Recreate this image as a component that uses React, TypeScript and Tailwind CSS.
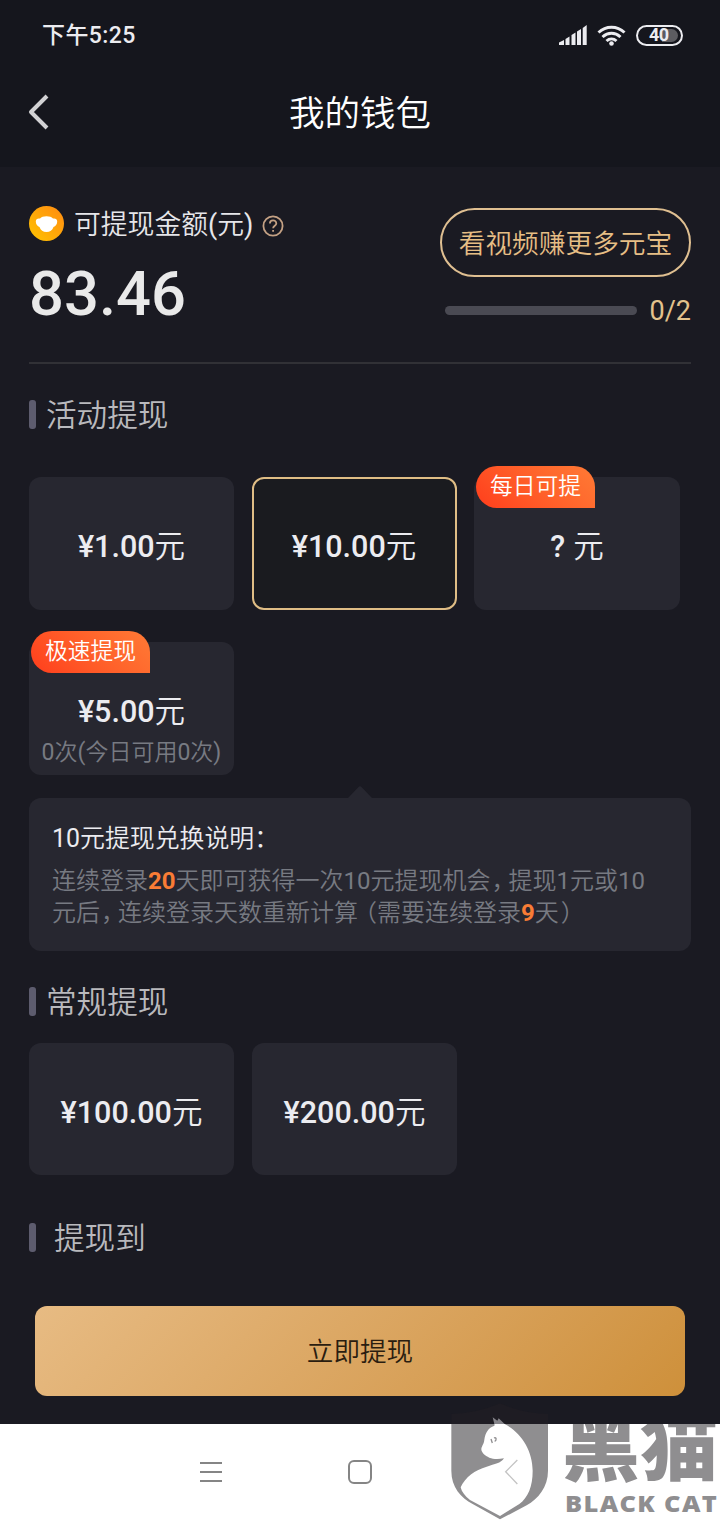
import React from "react";

const activityCards = [
  { amount: "¥1.00" },
  { amount: "¥10.00", active: true },
  { amount: "?", badge: "每日可提", gap: true },
  { amount: "¥5.00", badge: "极速提现", note: true },
];

const normalCards = [{ amount: "¥100.00" }, { amount: "¥200.00" }];

type CardProps = {
  amount: string;
  active?: boolean;
  badge?: string;
  note?: boolean;
  gap?: boolean;
};

const Card = ({ amount, active, badge, note, gap }: CardProps) => (
  <div
    className={`relative flex h-full items-center justify-center rounded-[12px] ${
      active ? "border-2 border-[#dfbd85] bg-[#1a1b1f]" : "bg-[#272730]"
    }`}
  >
    <p className="flex items-center whitespace-pre pt-[7px] text-[30.5px] leading-[36px] text-[#ececf0]">
      <span className="font-medium">{amount}</span>
      <span className={gap ? "ml-2 font-[350]" : "font-[350]"}>元</span>
    </p>
    {badge && (
      <span className="absolute -top-[11px] left-[2px] flex h-[42px] w-[119px] items-center justify-center rounded-[21px] rounded-br-none bg-linear-45 from-[#ff3c1c] to-[#ff7a35] pt-[1px] text-[22.8px] font-[350] text-white">
        {badge}
      </span>
    )}
    {note && (
      <span className="absolute inset-x-0 bottom-[6px] whitespace-nowrap text-center text-[23px] leading-[32px] font-[350] text-[#777a82]">
        <span className="font-normal">0</span>次<span className="font-normal">(</span>今日可用
        <span className="font-normal">0</span>次<span className="font-normal">)</span>
      </span>
    )}
  </div>
);

const SectionTitle = ({ title, wide }: { title: string; wide?: boolean }) => (
  <div className="flex h-[30px] items-center">
    <span className="h-[29px] w-[7px] rounded-[3px] bg-[#5d5c6e]" />
    <h2
      className={`pt-[3px] text-[30.6px] leading-[30px] font-[350] text-[#b9b9bd] ${
        wide ? "ml-[18px]" : "ml-[10px]"
      }`}
    >
      {title}
    </h2>
  </div>
);

// half-width comma
const Comma = () => (
  <span className="ml-[1px] mr-[5px] [font-feature-settings:'halt']">，</span>
);

const StatusBar = () => (
  <div className="flex h-[70px] items-center justify-between pl-[42px] pr-[37px] text-[#ececf0]">
    <span className="pt-[2px] text-[23px] font-medium tracking-[0.4px]">下午5:25</span>
    <div className="flex items-center">
      <svg width="28" height="20" viewBox="0 0 28 20" fill="#ececf0">
        <path d="M0 20v-2.500l5-2.500v5zM6.500 20v-6l4-2.500v8.500zM12.500 20v-10l4-2.500v12.500zM18 20V6.500l4-2.500v16zM23.700 20V3l4-3v20z" />
      </svg>
      <svg className="ml-[10px]" width="29" height="21" viewBox="0 0 29 21" fill="none" stroke="#ececf0" strokeWidth="3">
        <path d="M1.500 7.500c7.500-7 18.500-7 26 0M5.500 12c5.500-5 12.500-5 18 0M9.500 16c3-2.700 7-2.700 10 0" />
        <circle cx="14.500" cy="18.500" r="2.300" fill="#ececf0" stroke="none" />
      </svg>
      <div className="relative ml-[10px] flex h-[21px] w-[47px] items-center rounded-full border-2 border-[#ececf0] pl-[11px]">
        <span className="absolute right-[3px] top-[2px] h-[13px] w-[16px] rounded-r-full bg-[#5c5c61]" />
        <span className="relative text-[18px] leading-[18px] font-bold tracking-[-0.5px]">40</span>
      </div>
    </div>
  </div>
);

const Coin = () => (
  <svg className="-mt-[2px]" width="35" height="35" viewBox="0 0 35 35">
    <defs>
      <linearGradient id="coin" x1="0" y1="1" x2="1" y2="0">
        <stop offset="0" stopColor="#ffc400" />
        <stop offset="1" stopColor="#ff8a12" />
      </linearGradient>
    </defs>
    <circle cx="17.500" cy="17.500" r="17.500" fill="url(#coin)" />
    <path
      d="M6.800 15.500c0-2.600 1.800-3.400 4.200-3 1.300-1.600 3.500-2.300 6.500-2.300s5.200.7 6.500 2.300c2.400-.4 4.200.4 4.200 3 0 3-1.700 4.500-3.700 5.500-1.200 3.300-3.500 5-7 5s-5.800-1.700-7-5c-2-1-3.700-2.500-3.700-5.500z"
      fill="#fff"
    />
  </svg>
);

const Watermark = () => (
  <>
    <svg className="absolute -top-[34px] left-[440px]" width="110" height="130" viewBox="0 0 330 390">
      <path d="M34 72Q110 70 180 40q70 30 144 32v30H34z" fill="#1e1c23" />
      <path d="M34 102h290v140c0 50-30 84-64 104l-80 42-82-46c-36-20-64-50-64-100z" fill="#8f8e90" />
      <path d="M158 82l14 10 4-7 18 17h-31z" fill="#85848a" />
      <path
        d="M163 102h31c50 26 84 80 84 140 0 48-14 80-40 100l-58 36-90-48c-15-12-25-24-28-38 13-30 43-52 78-62 25-8 42-10 52-25-17 3-32 3-44-2-13-5-24-16-24-25 0-9 8-16 9-29 3-20 13-36 27-40 5-2 4-4 3-7z"
        fill="#fff"
      />
      <path d="M153 147l4 12M162 144c8-4 8 8 2 10" stroke="#8f8e90" strokeWidth="4" fill="none" />
      <path d="M232 210l-35 35 35 37" stroke="#c4c4c4" strokeWidth="4" fill="none" />
    </svg>
    <div className="absolute inset-y-0 left-[562px] w-[158px] overflow-hidden text-[#8f8e90]">
      <p className="-mt-[15px] whitespace-nowrap text-[78px] leading-[80px] font-black">黑猫</p>
      <p className="mt-[3px] ml-[3px] w-[136px] origin-left scale-x-[1.13] whitespace-nowrap font-['Open_Sans'] text-[22.500px] leading-[24px] font-extrabold tracking-[1.200px]">
        BLACK CAT
      </p>
    </div>
  </>
);

const App = () => {
  return (
    <div className="flex h-[1520px] w-[720px] flex-col overflow-hidden bg-[#1a1a22] font-[Roboto,'Noto_Sans_CJK_SC',sans-serif]">
      <header className="h-[167px] bg-[#15161d]">
        <StatusBar />
        <div className="grid h-[84px] grid-cols-[1fr_auto_1fr] items-center">
          <svg className="ml-[27px]" width="22" height="38" viewBox="0 0 22 38" fill="none" stroke="#d2d2d4" strokeWidth="4" strokeLinejoin="round">
            <path d="M20 3L4 19l16 16" />
          </svg>
          <h1 className="pt-[3px] text-[35.500px] leading-[44px] font-[350] text-white">我的钱包</h1>
        </div>
      </header>

      <main className="flex h-[1257px] flex-col px-[29px]">
        <section className="flex h-[197px] justify-between border-b-2 border-[#313136]">
          <div className="pt-[39px]">
            <div className="flex h-[36px] items-center">
              <Coin />
              <span className="ml-[10px] pt-[2px] text-[26.8px] leading-[34px] font-[350] text-[#e6e6ea]">
                可提现金额<span className="font-normal">(</span>元<span className="font-normal">)</span>
              </span>
              <svg className="mt-[4px] ml-[9px]" width="22" height="22" viewBox="0 0 22 22" fill="none" stroke="#c4a184" strokeWidth="1.800">
                <circle cx="11" cy="11" r="9.600" />
                <path d="M7.900 8.600c0-4.200 6.400-4.200 6.400-.2 0 2.300-3.200 2.400-3.200 4.900M11.100 15v1.800" />
              </svg>
            </div>
            <p className="mt-[17px] text-[61.500px] leading-[70px] font-medium text-[#e9e9e9]">83.46</p>
          </div>
          <div className="flex w-[251px] flex-col pt-[41px]">
            <button className="h-[69px] rounded-full border-2 border-[#dfbf91] pt-[3px] text-[26.7px] font-[350] text-[#e6be85]">
              看视频赚更多元宝
            </button>
            <div className="mt-[16px] flex items-center justify-between pl-[5px]">
              <span className="h-[9px] w-[192px] rounded-full bg-[#4a4a53]" />
              <span className="pt-[1px] text-[27px] leading-[34px] text-[#e3c28c]">0/2</span>
            </div>
          </div>
        </section>

        <div className="mt-[35px]">
          <SectionTitle title="活动提现" />
        </div>
        <div className="mt-[48px] grid auto-rows-[133px] grid-cols-[205px_205px_206px] gap-x-[17.5px] gap-y-[32px]">
          {activityCards.map((card) => (
            <Card key={card.amount} {...card} />
          ))}
        </div>

        <section className="relative mt-[23px] h-[153px] rounded-[12px] bg-[#272730] px-[23px] pt-[24px]">
          <svg className="absolute -top-[12px] left-[319px]" width="24" height="12" viewBox="0 0 24 12">
            <path d="M0 12L10.500 1q1.500-1.500 3 0L24 12z" fill="#272730" />
          </svg>
          <h3 className="text-[24.900px] leading-[34px] text-[#ececf0]">
            10<span className="font-[350]">元提现兑换说明：</span>
          </h3>
          <div className="mt-[9px] whitespace-nowrap text-[24px] leading-[32px] font-[350] text-[#777a82]">
            <p>
              连续登录<b className="font-bold text-[#f97c35]">20</b>天即可获得一次
              <span className="font-normal">10</span>元提现机会
              <Comma />
              提现<span className="font-normal">1</span>元或<span className="font-normal">10</span>
            </p>
            <p>
              元后
              <Comma />
              连续登录天数重新计算
              <span className="ml-[7px] [font-feature-settings:'halt']">（</span>需要连续登录
              <b className="font-bold text-[#f97c35]">9</b>天
              <span className="ml-[2px] [font-feature-settings:'halt']">）</span>
            </p>
          </div>
        </section>

        <div className="mt-[35px]">
          <SectionTitle title="常规提现" />
        </div>
        <div className="mt-[27px] grid h-[132px] grid-cols-[205px_205px] gap-x-[18px]">
          {normalCards.map((card) => (
            <Card key={card.amount} {...card} />
          ))}
        </div>

        <div className="mt-[47px]">
          <SectionTitle title="提现到" wide />
        </div>
        <button className="mx-[6px] mt-[54px] h-[90px] rounded-[12px] bg-linear-135 from-[#e7bb83] to-[#ce903a] pt-[2px] text-[26.600px] font-[350] text-[#2a1d10]">
          立即提现
        </button>
      </main>

      <nav className="relative h-[96px] bg-white">
        <div className="flex h-full items-center pl-[200px]">
          <svg width="22" height="22" viewBox="0 0 22 22" stroke="#858585" strokeWidth="2">
            <path d="M0 2h22M0 11h22M0 20h22" />
          </svg>
          <span className="ml-[126px] h-[24px] w-[24px] rounded-[6px] border-2 border-[#858585]" />
        </div>
        <Watermark />
      </nav>
    </div>
  );
};

export default App;
